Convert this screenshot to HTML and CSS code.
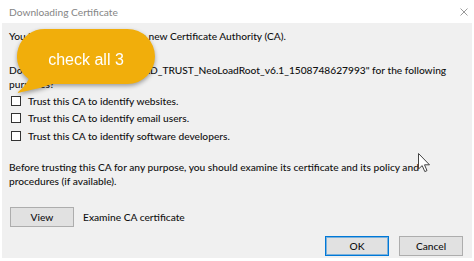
FILE: index.html
```html
<!DOCTYPE html>
<html lang="en">
  <head>
    <meta charset="UTF-8" />
    <title>Downloading Certificate</title>
    <link rel="stylesheet" href="styles.css">
  </head>
  <body>
    <div class="dialog">
      <div class="titlebar">
        <span class="title">Downloading Certificate</span>
        <svg class="close" width="8" height="8" viewBox="0 0 8 8">
          <path d="M0.5 0.5 L7.5 7.5 M7.5 0.5 L0.5 7.5" stroke="#9a9a9a" stroke-width="1" fill="none" />
        </svg>
      </div>

      <div class="panel">
        <p class="intro">You have been asked to trust a new Certificate Authority (CA).</p>
        <p class="question">
          Do you want to trust "NEOLOAD_TRUST_NeoLoadRoot_v6.1_1508748627993" for the following<br>purposes?
        </p>

        <!-- Trust purposes -->
        <ul class="purposes">
          <li><span class="box"></span>Trust this CA to identify websites.</li>
          <li><span class="box"></span>Trust this CA to identify email users.</li>
          <li><span class="box"></span>Trust this CA to identify software developers.</li>
        </ul>

        <p class="advice">
          Before trusting this CA for any purpose, you should examine its certificate and its policy and<br>procedures (if available).
        </p>

        <div class="examine">
          <button class="btn">View</button>
          <span>Examine CA certificate</span>
        </div>

        <div class="actions">
          <button class="btn btn-default">OK</button>
          <button class="btn">Cancel</button>
        </div>
      </div>

      <!-- Tutorial callout drawn over the dialog -->
      <div class="callout">
        <svg width="165" height="72" viewBox="0 0 165 72">
          <path d="M44.5 4 H127.5 A27.5 27.5 0 0 1 127.5 59 H52 C46 61 34 65 17 68 C23 63 27 58 28.7 54 A27.5 27.5 0 0 1 44.5 4 Z" fill="#f1ae0b" />
        </svg>
        <span class="callout-label">check all 3</span>
      </div>

      <svg class="cursor" width="13" height="20" viewBox="0 0 13 20">
        <path d="M0.5 0.5 V16 L4.2 12.6 L6.8 18.6 L9 17.6 L6.5 11.8 H11.5 Z" fill="#fff" stroke="#444" stroke-width="1" stroke-linejoin="round" />
      </svg>
    </div>
  </body>
</html>
```

FILE: styles.css
```css
/* Global Styles */
body {
  margin: 0;
  background: #fff;
  font-family: "Lato", "Open Sans", sans-serif;
}

.dialog {
  position: relative;
  width: 474px;
  height: 261px;
  overflow: hidden;
}

.titlebar {
  height: 23px;
  display: flex;
  align-items: center;
  justify-content: space-between;
  padding: 0 6px 0 9px;
  box-sizing: border-box;
}

.title {
  font-size: 10.2px;
  color: #858585;
}

.panel {
  margin: 0 2px;
  height: 235px;
  background: #f0f0f0;
  padding: 6px 9px 0 7px;
  box-sizing: border-box;
  font-size: 10.2px;
  font-weight: 500;
  line-height: 14px;
  color: #111;
  white-space: nowrap;
}

p {
  margin: 0;
}

.question {
  margin-top: 20px;
}

.purposes {
  list-style: none;
  margin: 1px 0 0;
  padding: 0 0 0 2px;
}

.purposes li {
  height: 17.5px;
  display: flex;
  align-items: center;
  gap: 7px;
}

.box {
  width: 10px;
  height: 10px;
  box-sizing: border-box;
  border: 1px solid #333;
  background: #fff;
}

.advice {
  margin-top: 15.5px;
}

.examine {
  margin-top: 19px;
  display: flex;
  align-items: center;
  gap: 9px;
}

.examine .btn {
  margin-left: 1px;
}

.btn {
  width: 64px;
  height: 20px;
  padding: 0;
  background: #e1e1e1;
  border: 1px solid #adadad;
  font-family: inherit;
  font-size: 10.2px;
  font-weight: 500;
  color: #111;
}

.btn-default {
  border-color: #0078d7;
  box-shadow: inset 0 0 0 1px rgba(0, 120, 215, 0.45);
}

.actions {
  margin-top: 9px;
  display: flex;
  justify-content: flex-end;
  gap: 10px;
}

.callout {
  position: absolute;
  left: 0;
  top: 25px;
  width: 165px;
  height: 72px;
  filter: drop-shadow(0 2px 2px rgba(0, 0, 0, 0.35));
}

.callout svg {
  display: block;
}

.callout-label {
  position: absolute;
  left: 17px;
  top: 7px;
  width: 138px;
  height: 55px;
  display: flex;
  align-items: center;
  justify-content: center;
  font-family: "Liberation Sans", Arial, sans-serif;
  font-size: 16px;
  color: #fff;
}

.cursor {
  position: absolute;
  left: 418px;
  top: 153px;
}
```
